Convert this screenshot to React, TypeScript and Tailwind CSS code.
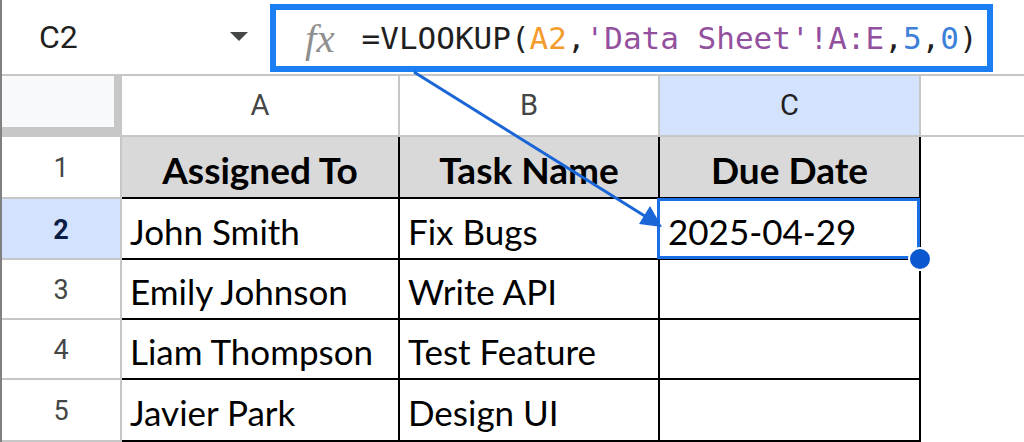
import React from "react";

const cellFont = { fontFamily: "Lato, 'Open Sans', sans-serif" };

export default function App() {
  const rows = [
    { n: "1", a: "Assigned To", b: "Task Name", c: "Due Date", head: true },
    { n: "2", a: "John Smith", b: "Fix Bugs", c: "2025-04-29", sel: true },
    { n: "3", a: "Emily Johnson", b: "Write API", c: "" },
    { n: "4", a: "Liam Thompson", b: "Test Feature", c: "" },
    { n: "5", a: "Javier Park", b: "Design UI", c: "" },
  ];
  const heights = ["h-[62px]", "h-[61px]", "h-[60px]", "h-[60px]", "h-[62px]"];

  return (
    <div className="relative w-[1024px] h-[442px] overflow-hidden bg-white border-l-2 border-[#808080]">
      {/* top bar */}
      <div className="flex h-[76px] border-b-2 border-[#c7c7c7]">
        <div className="flex w-[268px] items-center">
          <span
            className="pl-[37px] text-[32px] text-[#1f1f1f]"
            style={{ fontFamily: "Roboto, sans-serif" }}
          >
            C2
          </span>
          <svg className="ml-auto mr-[22px]" width="18" height="10" viewBox="0 0 18 10">
            <path d="M0 0 L18 0 L9 9 Z" fill="#444746" />
          </svg>
        </div>
        <div className="mt-[4px] flex h-[68px] w-[723px] items-center border-[6px] border-[#1b7ef2] bg-white">
          <span
            className="ml-[29px] text-[41px] italic leading-none text-[#8f8f8f]"
            style={{ fontFamily: "'Liberation Serif', serif" }}
          >
            fx
          </span>
          <span
            className="ml-[27px] text-[31px] text-[#1f1f1f]"
            style={{ fontFamily: "'DejaVu Sans Mono', monospace" }}
          >
            =VLOOKUP(<span className="text-[#f39c2b]">A2</span>,
            <span className="text-[#93509f]">'Data Sheet'!A:E</span>,
            <span className="text-[#3d7fd9]">5</span>,
            <span className="text-[#3d7fd9]">0</span>)
          </span>
        </div>
      </div>

      {/* grid */}
      <div className="grid grid-cols-[120px_278px_260px_261px_1fr]">
        {/* header row */}
        <div className="h-[61px] bg-[#f8f9fa] border-r-[8px] border-b-[10px] border-[#c7c7c7]" />
        {["A", "B", "C"].map((l) => (
          <div
            key={l}
            className={`flex h-[61px] items-center justify-center border-r-2 border-b-2 border-[#c7c7c7] text-[29px] ${
              l === "C" ? "bg-[#d3e3fd] text-[#1f1f1f]" : "bg-white text-[#444746]"
            }`}
            style={{ fontFamily: "Roboto, sans-serif" }}
          >
            {l}
          </div>
        ))}
        <div className="h-[61px] border-b-2 border-[#c7c7c7]" />

        {rows.map((r, i) => (
          <React.Fragment key={r.n}>
            <div
              className={`flex ${heights[i]} items-center justify-center border-r-2 border-b-2 border-[#c7c7c7] pt-[3px] text-[27px] ${
                r.sel ? "bg-[#d3e3fd] font-bold text-[#0b1d45]" : "bg-white text-[#444746]"
              }`}
              style={{ fontFamily: "Roboto, sans-serif" }}
            >
              {r.n}
            </div>
            {[r.a, r.b, r.c].map((t, j) => (
              <div
                key={j}
                className={`relative flex ${heights[i]} items-center border-r-2 border-b-2 border-black pt-[5px] text-black ${
                  r.head
                    ? "justify-center bg-[#d9d9d9] text-[37px] font-bold"
                    : "bg-white pl-[8px] text-[35px]"
                } ${r.sel && j === 2 ? "z-10" : ""}`}
                style={cellFont}
              >
                {t}
                {r.sel && j === 2 && (
                  <>
                    <div className="absolute left-[-3px] top-[-1px] right-[-1px] bottom-[-1px] border-[3px] border-[#1a6fe6]" />
                    <div className="absolute right-[-13px] bottom-[-13px] h-[24px] w-[24px] rounded-full border-2 border-white bg-[#0b57d0]" />
                  </>
                )}
              </div>
            ))}
            <div className={`${heights[i]} bg-white`} />
          </React.Fragment>
        ))}
      </div>

      {/* arrow */}
      <svg className="pointer-events-none absolute left-0 top-0 z-20" width="1024" height="442" viewBox="-2 0 1024 442">
        <line x1="410" y1="72" x2="644" y2="218" stroke="#1a66d6" strokeWidth="3" />
        <path d="M658 227 L635 224 L646 206 Z" fill="#1a66d6" />
      </svg>
    </div>
  );
}
